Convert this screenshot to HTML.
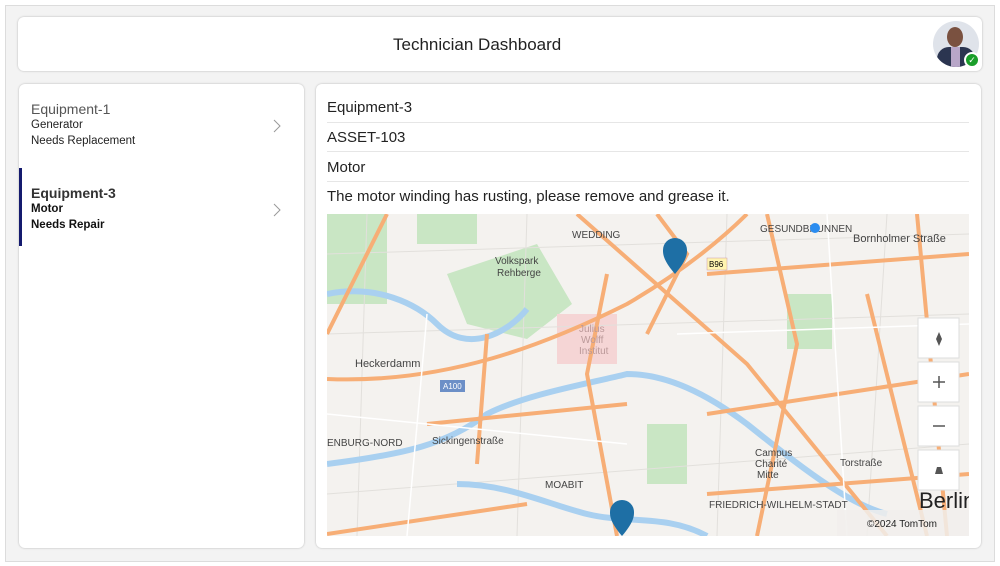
<!DOCTYPE html>
<html><head><style>
*{margin:0;padding:0;box-sizing:border-box}
body{width:1000px;height:566px;background:#fff;font-family:"Liberation Sans",sans-serif;position:relative;overflow:hidden}
.frame{position:absolute;left:5px;top:5px;width:990px;height:557px;background:#f3f3f3;border:1px solid #dcdcdc}
.card{position:absolute;background:#fff;border-radius:6px;box-shadow:0 0 2px rgba(0,0,0,.25)}
.t{position:absolute;white-space:nowrap}
.line{position:absolute;left:327px;width:642px;height:1px;background:#e6e6e6}
</style></head><body>
<div class="frame"></div>
<div class="card" style="left:18px;top:17px;width:964px;height:54px"></div>
<div class="t" style="left:393px;top:35px;font-size:17px;color:#222">Technician Dashboard</div>
<div style="position:absolute;left:933px;top:21px;width:46px;height:46px;border-radius:50%;background:#dfe3ea;overflow:hidden">
 <div style="position:absolute;left:14px;top:6px;width:16px;height:20px;border-radius:50%;background:#7a5140"></div>
 <div style="position:absolute;left:4px;top:26px;width:38px;height:30px;border-radius:12px 12px 0 0;background:#2b3550"></div>
 <div style="position:absolute;left:18px;top:26px;width:9px;height:22px;background:#b8a6c8"></div>
</div>
<div style="position:absolute;left:964px;top:52px;width:16px;height:16px;border-radius:50%;background:#1a9e2a;border:2px solid #fff;color:#fff;font-size:9px;text-align:center;line-height:12px">✓</div>

<div class="card" style="left:19px;top:84px;width:285px;height:464px"></div>
<div class="t" style="left:31px;top:101px;font-size:14px;color:#555">Equipment-1</div>
<div class="t" style="left:31px;top:119px;font-size:11.5px;color:#222">Generator</div>
<div class="t" style="left:31px;top:135px;font-size:11.5px;color:#222">Needs Replacement</div>
<svg style="position:absolute;left:272px;top:119px" width="10" height="16"><path d="M2,1 L8,7 L2,13" fill="none" stroke="#999" stroke-width="1"/></svg>
<div style="position:absolute;left:19px;top:168px;width:3px;height:78px;background:#141a6e"></div>
<div class="t" style="left:31px;top:185px;font-size:14px;color:#333;font-weight:bold">Equipment-3</div>
<div class="t" style="left:31px;top:203px;font-size:11.5px;color:#111;font-weight:bold">Motor</div>
<div class="t" style="left:31px;top:219px;font-size:11.5px;color:#111;font-weight:bold">Needs Repair</div>
<svg style="position:absolute;left:272px;top:203px" width="10" height="16"><path d="M2,1 L8,7 L2,13" fill="none" stroke="#999" stroke-width="1"/></svg>

<div class="card" style="left:316px;top:84px;width:665px;height:464px"></div>
<div class="t" style="left:327px;top:99px;font-size:15px;color:#222">Equipment-3</div>
<div class="line" style="top:122px"></div>
<div class="t" style="left:327px;top:129px;font-size:15px;color:#222">ASSET-103</div>
<div class="line" style="top:151px"></div>
<div class="t" style="left:327px;top:159px;font-size:15px;color:#222">Motor</div>
<div class="line" style="top:181px"></div>
<div class="t" style="left:327px;top:188px;font-size:15px;color:#222">The motor winding has rusting, please remove and grease it.</div>

<svg style="position:absolute;left:327px;top:214px" width="642" height="322" viewBox="0 0 642 322">
<rect width="642" height="322" fill="#f4f2ef"/>
<g fill="#c9e6c4">
<polygon points="120,60 210,30 245,90 200,125 140,110"/>
<rect x="0" y="0" width="60" height="90"/>
<rect x="460" y="80" width="45" height="55"/>
<rect x="320" y="210" width="40" height="60"/>
<rect x="90" y="0" width="60" height="30"/>
</g>
<rect x="230" y="100" width="60" height="50" fill="#f5d5d5"/>
<g fill="none" stroke="#e2e0dc" stroke-width="1">
<path d="M0,40 L642,20"/><path d="M0,120 L642,100"/><path d="M0,280 L642,230"/><path d="M40,0 L30,322"/><path d="M200,0 L190,322"/><path d="M400,0 L390,322"/><path d="M560,0 L540,322"/>
</g>
<g fill="none" stroke="#a9d0f0" stroke-width="6">
<path d="M0,80 C50,70 90,90 110,110 C140,140 180,120 200,95"/>
<path d="M0,250 C80,240 120,230 160,200 C200,180 260,170 300,160 C340,160 380,180 420,210 C470,250 520,290 560,300"/>
<path d="M130,270 C180,270 220,290 260,300 C300,310 340,300 380,322"/>
</g>
<g fill="none" stroke="#f7ae76" stroke-width="4">
<path d="M0,165 C120,170 220,130 300,90 C360,55 400,20 420,0"/>
<path d="M250,0 L420,150 L560,322"/>
<path d="M60,0 L0,120"/>
<path d="M290,322 L260,160 L280,60"/>
<path d="M380,60 L642,40"/>
<path d="M440,0 L470,130 L430,322"/>
<path d="M540,80 L600,322"/>
<path d="M380,200 L642,160"/>
<path d="M100,210 L300,190"/>
<path d="M0,320 L200,290"/>
<path d="M330,0 L360,40 L320,120"/>
<path d="M160,120 L150,250"/>
<path d="M590,0 L620,322"/>
<path d="M380,280 L642,260"/>
</g>
<g fill="none" stroke="#fff" stroke-width="1.5">
<path d="M0,200 L300,230"/><path d="M100,100 L80,322"/><path d="M500,0 L520,322"/><path d="M350,120 L642,110"/>
</g>
<g font-size="10" fill="#444" font-family="Liberation Sans">
<text x="245" y="24">WEDDING</text><text x="433" y="18">GESUNDBRUNNEN</text><text x="526" y="28" font-size="11">Bornholmer Straße</text>
<text x="168" y="50">Volkspark</text><text x="170" y="62">Rehberge</text>
<text x="28" y="153" font-size="11">Heckerdamm</text><text x="0" y="232">ENBURG-NORD</text>
<text x="105" y="230">Sickingenstraße</text><text x="218" y="274">MOABIT</text>
<text x="382" y="294">FRIEDRICH-WILHELM-STADT</text><text x="513" y="252">Torstraße</text>
<text x="428" y="242">Campus</text><text x="428" y="253">Charité</text><text x="430" y="264">Mitte</text>
<text x="252" y="118" fill="#b99">Julius</text><text x="254" y="129" fill="#b99">Wolff</text><text x="252" y="140" fill="#b99">Institut</text>
</g>
<rect x="380" y="44" width="20" height="12" fill="#fff4b0" stroke="#c9a" stroke-width=".5"/><text x="382" y="53" font-size="8" font-family="Liberation Sans">B96</text>
<rect x="113" y="166" width="25" height="12" fill="#6c8fc7"/><text x="116" y="175" font-size="8" fill="#fff" font-family="Liberation Sans">A100</text>
<text x="592" y="294" font-size="22" fill="#222" font-family="Liberation Sans">Berlin</text>
<circle cx="488" cy="14" r="5" fill="#2a8cf0"/>
<path d="M348,60 C336,46 336,40 336,36 a12,12 0 0 1 24,0 c0,4 0,10 -12,24z" fill="#1e6fa5"/>
<path d="M295,322 C283,308 283,302 283,298 a12,12 0 0 1 24,0 c0,4 0,10 -12,24z" fill="#1e6fa5"/>
<rect x="510" y="296" width="132" height="26" fill="#f1efec" opacity=".85"/>
<text x="540" y="313" font-size="10" fill="#222" font-family="Liberation Sans">©2024 TomTom</text>
<g fill="#fff" stroke="#ddd"><rect x="591" y="104" width="41" height="40"/><rect x="591" y="148" width="41" height="40"/><rect x="591" y="192" width="41" height="40"/><rect x="591" y="236" width="41" height="40"/></g>
<g stroke="#555" stroke-width="1.5"><line x1="606" y1="168" x2="618" y2="168"/><line x1="612" y1="162" x2="612" y2="174"/><line x1="606" y1="212" x2="618" y2="212"/></g>
<path d="M612,118 l3,7 l-3,7 l-3,-7z" fill="#555"/><path d="M608,260 l8,0 l-2,-7 l-4,0z" fill="#555"/>
</svg>
</body></html>
